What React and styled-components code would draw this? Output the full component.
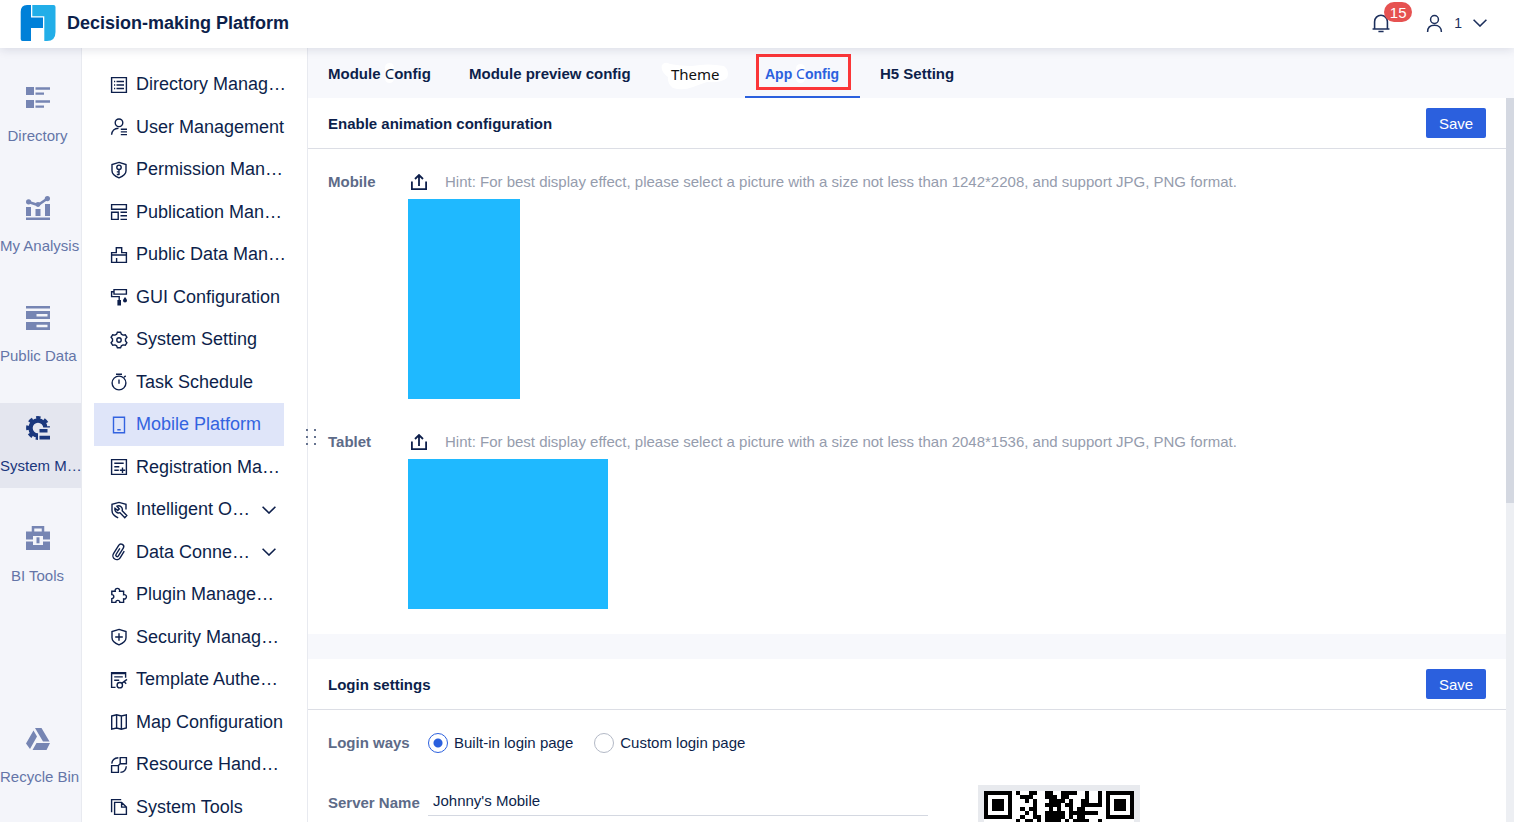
import React, { useState } from "react";
import styled, { createGlobalStyle } from "styled-components";

const GlobalStyle = createGlobalStyle`
  * {
    box-sizing: border-box;
  }

  body {
    margin: 0;
    color: #0d1f4b;
    background: #ffffff;
    font-family: "Liberation Sans", Arial, sans-serif;
    font-size: 15px;
  }

  button,
  input {
    font-family: inherit;
  }
`;

const Page = styled.div`
  display: flex;
  flex-direction: column;
  height: 100vh;
  overflow: hidden;
`;

const Header = styled.header`
  display: flex;
  align-items: center;
  justify-content: space-between;
  flex: none;
  height: 48px;
  padding: 0 27px 2px 20px;
  background: #ffffff;
  box-shadow: 0 1px 10px rgba(20, 30, 70, 0.14);
  z-index: 2;
`;

const Brand = styled.div`
  display: flex;
  align-items: center;
  gap: 11px;
`;

const Title = styled.h1`
  margin: 0;
  font-size: 18px;
  line-height: 24px;
`;

const HeaderTools = styled.div`
  display: flex;
  align-items: center;
  color: #1c2f5c;
`;

const BellButton = styled.button`
  position: relative;
  display: flex;
  margin-right: 36px;
  padding: 0;
  border: 0;
  background: none;
  color: inherit;
`;

const Badge = styled.span`
  position: absolute;
  left: 12px;
  top: -12px;
  width: 28px;
  height: 20px;
  border-radius: 10px;
  background: #e65251;
  color: #ffffff;
  font-size: 15px;
  line-height: 21px;
  text-align: center;
`;

const UserButton = styled.button`
  display: flex;
  align-items: center;
  gap: 11px;
  padding: 0;
  border: 0;
  background: none;
  color: inherit;
  font-size: 14px;
`;

const Body = styled.div`
  display: flex;
  flex: 1;
  min-height: 0;
`;

const Rail = styled.nav`
  display: flex;
  flex-direction: column;
  flex: none;
  gap: 25px;
  width: 82px;
  padding: 25px 0 23px;
  border-right: 1px solid #e8eaf0;
  background: #f4f5fa;
`;

const RailItem = styled.a`
  display: flex;
  flex-direction: column;
  align-items: safe center;
  gap: 16px;
  height: 85px;
  padding: 13px 6px 0 0;
  background: ${(props) => (props.$active ? "#e4e6ef" : "transparent")};
  color: ${(props) => (props.$active ? "#1a377d" : "#7685b3")};
  text-decoration: none;

  &:last-child {
    margin-top: auto;
  }
`;

const RailLabel = styled.span`
  color: ${(props) => (props.$active ? "#1a377d" : "#6475a8")};
  font-size: 15px;
  line-height: 20px;
  white-space: nowrap;
`;

const Menu = styled.nav`
  flex: none;
  width: 226px;
  padding: 15px 23px 0 12px;
  border-right: 1px solid #e8eaf0;
  overflow: hidden;
`;

const MenuItem = styled.a`
  display: flex;
  align-items: center;
  height: 42px;
  padding: 0 8px 0 17px;
  background: ${(props) => (props.$active ? "#dfe5f9" : "transparent")};
  color: ${(props) => (props.$active ? "#3363e0" : "#0d1f4b")};
  font-size: 18px;
  text-decoration: none;
  white-space: nowrap;

  &:nth-child(odd) {
    height: 43px;
  }
`;

const MenuLabel = styled.span`
  flex: 1;
  padding-left: 9px;
`;

const Main = styled.main`
  position: relative;
  display: flex;
  flex-direction: column;
  flex: 1;
  min-width: 0;
`;

const DragHandle = styled.div`
  position: absolute;
  left: -2px;
  top: 381px;
  display: grid;
  grid-template-columns: 2px 2px;
  gap: 5px 6px;
`;

const Dot = styled.span`
  height: 2px;
  background: #66738f;
`;

const Tabs = styled.div`
  display: flex;
  flex: none;
  height: 50px;
  background: #f7f8fc;
`;

const Tab = styled.button`
  position: relative;
  min-width: ${(props) => props.$width}px;
  padding: 4px 18px 0 20px;
  border: 0;
  border-bottom: 2px solid
    ${(props) => (props.$active ? "#2b60de" : "transparent")};
  background: none;
  color: ${(props) => (props.$active ? "#2b60de" : "#0d1f4b")};
  font-size: ${(props) => (props.$active ? 14 : 15)}px;
  font-weight: bold;
  line-height: 18px;
  text-align: left;
  white-space: nowrap;
`;

const ThinLetter = styled.span`
  font-family: "Noto Sans", sans-serif;
  font-weight: normal;
  line-height: 0;
  border-radius: 5px;
  background: #ffffff;
`;

const ThemeLabel = styled.span`
  position: relative;
  color: #111111;
  font-family: "Noto Sans", sans-serif;
  font-size: 15px;
  font-weight: normal;
`;

const Smudge = styled.svg`
  position: absolute;
  left: 10px;
  top: 14px;
`;

const Highlight = styled.span`
  position: absolute;
  left: 11px;
  top: 6px;
  width: 95px;
  height: 36px;
  border: 3px solid #fb3638;
`;

const Scroller = styled.div`
  display: flex;
  flex: 1;
  min-height: 0;
  background: #f7f8fc;
`;

const Content = styled.div`
  display: flex;
  flex-direction: column;
  flex: 1;
  gap: 25px;
  overflow: hidden;
`;

const ScrollTrack = styled.div`
  width: 8px;
  background: #edeff3;
`;

const ScrollThumb = styled.div`
  height: 56%;
  background: #d4d8e1;
`;

const Section = styled.section`
  flex: none;
  background: #ffffff;
`;

const SectionHeader = styled.div`
  display: flex;
  align-items: center;
  justify-content: space-between;
  height: 51px;
  padding: 0 20px;
  border-bottom: 1px solid #dcdee5;
`;

const SectionTitle = styled.h2`
  margin: 0;
  font-size: 15px;
`;

const SaveButton = styled.button`
  width: 60px;
  height: 30px;
  padding: 1px 0 0;
  border: 0;
  border-radius: 2px;
  background: #2b60de;
  color: #ffffff;
  font-size: 15px;
`;

const SectionBody = styled.div`
  display: flex;
  flex-direction: column;
  gap: 25px;
  padding: 15px 20px 25px;
`;

const UploadRow = styled.div`
  display: flex;
  align-items: center;
  height: 35px;
`;

const FieldName = styled.span`
  flex: none;
  width: ${(props) => props.$width}px;
  color: #5d6b88;
  font-size: 15px;
  font-weight: bold;
  line-height: 26px;
  white-space: nowrap;
`;

const UploadButton = styled.button`
  display: flex;
  width: 37px;
  padding: 0 3px;
  border: 0;
  background: none;
  color: #0d1f4b;
`;

const Hint = styled.span`
  color: #959cad;
  font-size: 15px;
  white-space: nowrap;
`;

const Preview = styled.div`
  width: ${(props) => props.$width}px;
  height: ${(props) => props.$height}px;
  margin-left: 80px;
  background: #1fb9ff;
`;

const LoginRow = styled.div`
  display: flex;
  align-items: center;
  height: 35px;
`;

const RadioLabel = styled.label`
  display: flex;
  align-items: center;
  gap: 6px;
  margin-right: 21px;
  font-size: 15px;
`;

const Radio = styled.input`
  appearance: none;
  width: 20px;
  height: 20px;
  margin: 0;
  border: 1px solid #b3b9c6;
  border-radius: 50%;

  &:checked {
    border-color: #2b60de;
    background: radial-gradient(circle, #2b60de 4px, transparent 5px);
  }
`;

const ServerArea = styled.div`
  display: flex;
  align-items: flex-start;
  gap: 50px;
`;

const ServerField = styled.label`
  display: flex;
  align-items: flex-end;
  height: 31px;
`;

const ServerInput = styled.input`
  width: 500px;
  height: 30px;
  padding: 0 5px;
  border: 0;
  border-bottom: 1px solid #d4d8e1;
  color: #0d1f4b;
  font-size: 15px;
`;

const QrFrame = styled.div`
  display: flex;
  width: 162px;
  padding: 6px;
  background: #e8eaee;
`;

const qrRows = [
  "#######.#..##..##..####..#..#.#######",
  "#.....#..###...###.##....#..#.#.....#",
  "#.###.#...#.#...####.#..##..#.#.###.#",
  "#.###.#.....#..####.##..#####.#.###.#",
  "#.###.#..#.##...#.#..#.##.....#.###.#",
  "#.....#...#.#..#####.#######..#.....#",
  "#######..#..##.#####.#.##.....#######",
  "........#.##.#.####.#.####..#........",
];

const QrCode = () => (
  <svg width="150" height="150" viewBox="0 0 37 37" shapeRendering="crispEdges">
    <rect width="37" height="37" fill="#fff" />
    {qrRows.map((row, y) =>
      row
        .split("")
        .map((cell, x) =>
          cell === "#" ? (
            <rect key={`${x}-${y}`} x={x} y={y} width="1" height="1" />
          ) : null
        )
    )}
  </svg>
);

const Logo = () => (
  <svg width="36" height="36" viewBox="0 0 36 36">
    <path
      fill="#0080d8"
      d="M7 0h4v12.500h12v10.500H11V36H2.500Q.7 36 .7 34V7Q.7 0 7 0z"
    />
    <path
      fill="#22aee8"
      d="M12.300 0H33.500Q35.500 0 35.500 2V27Q35.500 36 27 36H24.300V11.300H12.300z"
    />
  </svg>
);

const railIcons = {
  directory: (
    <path d="M0 1h8v8H0zM9.500 1.200H24v2.600H9.500zM9.500 6.400H18v2.400H9.500zM0 14h8v8H0zM9.500 14.200H24v2.600H9.500zM9.500 19.400H18v2.400H9.500z" />
  ),
  analysis: (
    <>
      <path d="M0 11h5v9H0zM9.500 13h5v7h-5zM19 8h5v12h-5zM0 21.500h24V24H0z" />
      <path d="M2.500 6l9.500 3 9.500-6.500" fill="none" stroke="currentColor" strokeWidth="2.500" />
      <circle cx="2.600" cy="5.800" r="2.600" />
      <circle cx="12" cy="8.500" r="2.400" />
      <circle cx="21.400" cy="2.600" r="2.600" />
    </>
  ),
  data: (
    <path
      fillRule="evenodd"
      d="M0 0h24v2.500H0zM0 5h24v8H0zM10.500 8v2.500h11V8zM0 16h24v8H0zM10.500 18.700v2.500h11v-2.500z"
    />
  ),
  system: (
    <>
      <g fill="none" stroke="currentColor">
        <circle cx="12" cy="12" r="7.500" strokeWidth="4.400" />
        <circle cx="12" cy="12" r="10.300" strokeWidth="3.200" strokeDasharray="4.400 3.690" strokeDashoffset="2.200" />
      </g>
      <path fill="#e4e6ef" d="M12 11.500h12.500v13H12z" />
      <path d="M13.500 13h8v3.400h-8zM13.500 19.800H24v3.700H13.500z" />
    </>
  ),
  tools: (
    <>
      <path d="M7 6V1.300h10V6" fill="none" stroke="currentColor" strokeWidth="2.500" />
      <path fillRule="evenodd" d="M0 5.500h24v8h-7V10H7v3.500H0zM0 15.500h7V19h10v-3.500h7V24H0z" />
      <path d="M10.500 11.300h3v6h-3z" />
    </>
  ),
  recycle: (
    <path d="M9 1h6.500l8 13.500H17zM7.500 3.500l3.500 6L4 22 0 16.500zM10.500 16H24l-3.500 7H6.500z" />
  ),
};

const shield =
  "M8 .4l7 2.200v6.200c0 3.200-2.800 5.500-7 7-4.200-1.500-7-3.800-7-7V2.600z";

const menuIcons = {
  directory: (
    <path d="M.6.600h14.800v14.800H.6zM3 4.500h1.200M5.500 4.500H13M3 8h1.200M5.500 8H13M3 11.500h1.200M5.500 11.500H13" />
  ),
  user: (
    <>
      <circle cx="8" cy="3.800" r="3.800" />
      <path d="M.6 15.800C.8 12 3.500 9.300 7.500 9.200M9.800 10.200H16M9.800 12.900H16M9.800 15.600H16" />
    </>
  ),
  permission: (
    <>
      <path d={shield} />
      <circle cx="8" cy="5.300" r="2.200" />
      <path d="M8 7.500v5.600M8 9.900H5.800M8 12.500H5.800" />
    </>
  ),
  publication: (
    <path d="M.6.600h14.800v4.600H.6zM.6 8.300h6.600v7.100H.6zM9.500 8.300H16M9.500 11.800H16M9.500 15.400H16" />
  ),
  publicData: (
    <path d="M.6 15.400V5.600h4.700V.7h5.400v4.900h4.700v9.800zM.6 8h14.800M5.600 11v4.400" />
  ),
  gui: (
    <>
      <path d="M3 .6h12.400v4.500H3zM3 2.800H.6v4.800h7.600V11" />
      <path
        d="M6.400 11h3.600v5.500H6.400zM14 8c1.200 1.700 2 2.500 2 3.600a2 2 0 0 1-4 0C12 10.500 13 9.500 14 8z"
        fill="currentColor"
        stroke="none"
      />
    </>
  ),
  setting: (
    <>
      <path d="M6.400.2h3.200l.8 2 1.600.9 2.300-.4 1.600 2.600L14.500 7v2l1.400 1.700-1.600 2.600-2.300-.4-1.600.9-.8 2H6.400l-.8-2-1.600-.9-2.300.4-1.600-2.600L1.500 9V7L.1 5.300l1.600-2.600 2.300.4 1.600-.9z" />
      <circle cx="8" cy="8" r="2.200" />
    </>
  ),
  timer: (
    <>
      <circle cx="8" cy="9" r="6.900" />
      <path d="M5 .2h6M8 5.600v4.200M13 3.300l1.700-1.400" />
    </>
  ),
  mobile: <path d="M2.500.300h11v15.400h-11zM6.300 12.700h3.400" />,
  registration: (
    <path d="M15.400 7V.6H.6v14.800h14.800V7M3.300 4.300h9.400M3.300 7.700h5M3.300 11.200h4.500M8.800 11.200h5.400M11.500 8.500v5.400" />
  ),
  intelligent: (
    <>
      <path d="M15 7.500V2.400L8 .4 1 2.400v6.200c0 3.400 2 5.600 6.200 7.300" />
      <path d="M6 4.200a3.800 3.800 0 0 1 5.200 4.500l4.600 4.900-2 2.100-4.800-5A3.800 3.800 0 0 1 4 6.200l2.700 2.300L8.300 7z" />
    </>
  ),
  clip: (
    <g transform="rotate(32 8 8)">
      <path d="M12 4.500v7.800a3.900 3.900 0 0 1-7.800 0V2.500a2.700 2.700 0 0 1 5.400 0v9.200a1.400 1.400 0 0 1-2.800 0V4.500" />
    </g>
  ),
  plugin: (
    <path d="M.8 4.300h3.400a2.300 2.300 0 1 1 4.400 0h4v3.400a2.200 2.200 0 1 1 0 4.200v3.500H8.800a2 2 0 1 0-4 0h-4v-3.800a2 2 0 1 0 0-4z" />
  ),
  security: (
    <>
      <path d={shield} />
      <path d="M8 4.200v7.600M4.200 8h7.600" />
    </>
  ),
  template: (
    <>
      <path d="M4.500 15.400H.6V.6h14v5.200M.6 1.500h14M3.200 4.900h8.600M3.200 8.300h5" />
      <circle cx="8.800" cy="13.200" r="2.700" />
      <path d="M10.700 11.400L16 7.400M13 9.500l2.200 2.200" />
    </>
  ),
  map: (
    <path d="M.7 2l4.900-1.200L10.400 2l4.900-1.200V14l-4.900 1.200L5.600 14 .7 15.200zM5.600.8V14M10.400 2v13.200" />
  ),
  resource: (
    <path d="M9.200.6h6.200v6.200H9.200zM.6 8.600h6.800v6.800H.6zM7.400.7C3.600 1 1 3.200.8 6.600M15.300 9.200c-.2 3.600-2.300 5.800-5.900 6.200M7.400 8.600L9.200 6.800" />
  ),
  files: (
    <path d="M.6 13.200V.6h9.600M3.600 3.400h7l4.800 4.700v7.300H3.600zM10.600 3.400v4.700h4.800" />
  ),
};

const LineIcon = ({ children, size = 16 }) => (
  <svg
    width={size}
    height={size}
    viewBox="0 0 16 16"
    fill="none"
    stroke="currentColor"
    strokeWidth="1.400"
    overflow="visible"
  >
    {children}
  </svg>
);

const Chevron = () => (
  <svg
    width="14"
    height="8"
    viewBox="0 0 14 8"
    fill="none"
    stroke="currentColor"
    strokeWidth="1.600"
  >
    <path d="M.6.800L7 7l6.400-6.200" />
  </svg>
);

const railItems = [
  { icon: "directory", label: "Directory" },
  { icon: "analysis", label: "My Analysis" },
  { icon: "data", label: "Public Data" },
  { icon: "system", label: "System M…", active: true },
  { icon: "tools", label: "BI Tools" },
  { icon: "recycle", label: "Recycle Bin" },
];

const menuItems = [
  { icon: "directory", label: "Directory Manag…" },
  { icon: "user", label: "User Management" },
  { icon: "permission", label: "Permission Man…" },
  { icon: "publication", label: "Publication Man…" },
  { icon: "publicData", label: "Public Data Man…" },
  { icon: "gui", label: "GUI Configuration" },
  { icon: "setting", label: "System Setting" },
  { icon: "timer", label: "Task Schedule" },
  { icon: "mobile", label: "Mobile Platform", active: true },
  { icon: "registration", label: "Registration Ma…" },
  { icon: "intelligent", label: "Intelligent O…", more: true },
  { icon: "clip", label: "Data Conne…", more: true },
  { icon: "plugin", label: "Plugin Manage…" },
  { icon: "security", label: "Security Manag…" },
  { icon: "template", label: "Template Authe…" },
  { icon: "map", label: "Map Configuration" },
  { icon: "resource", label: "Resource Hand…" },
  { icon: "files", label: "System Tools" },
];

function Upload({ name, size }) {
  return (
    <UploadRow>
      <FieldName $width={80}>{name}</FieldName>
      <UploadButton aria-label={`Upload ${name}`}>
        <svg
          width="16"
          height="16"
          viewBox="0 0 16 16"
          fill="none"
          stroke="currentColor"
          strokeWidth="1.800"
        >
          <path d="M.9 7.500v7.600h14.200V7.500M8 12V1.200M4 5l4-4 4 4" />
        </svg>
      </UploadButton>
      <Hint>
        Hint: For best display effect, please select a picture with a size not
        less than {size}, and support JPG, PNG format.
      </Hint>
    </UploadRow>
  );
}

function App() {
  const [loginWay, setLoginWay] = useState("builtin");
  const [serverName, setServerName] = useState("Johnny's Mobile");

  return (
    <Page>
      <GlobalStyle />
      <Header>
        <Brand>
          <Logo />
          <Title>Decision-making Platform</Title>
        </Brand>
        <HeaderTools>
          <BellButton aria-label="Notifications">
            <LineIcon size={18}>
              <path d="M2.300 13V6.800a5.700 5.700 0 0 1 11.400 0V13M.5 13.300h15M5.700 15.600h4.600" />
            </LineIcon>
            <Badge>15</Badge>
          </BellButton>
          <UserButton>
            <LineIcon size={17}>
              <circle cx="8" cy="4.200" r="3.700" />
              <path d="M1.500 16c0-4 2.500-6.300 6.500-6.300s6.500 2.300 6.500 6.300" />
            </LineIcon>
            <span>1</span>
            <Chevron />
          </UserButton>
        </HeaderTools>
      </Header>

      <Body>
        <Rail>
          {railItems.map((item) => (
            <RailItem href="#" key={item.label} $active={item.active}>
              <svg width="24" height="24" viewBox="0 0 24 24" fill="currentColor">
                {railIcons[item.icon]}
              </svg>
              <RailLabel $active={item.active}>{item.label}</RailLabel>
            </RailItem>
          ))}
        </Rail>

        <Menu>
          {menuItems.map((item) => (
            <MenuItem href="#" key={item.label} $active={item.active}>
              <LineIcon>{menuIcons[item.icon]}</LineIcon>
              <MenuLabel>{item.label}</MenuLabel>
              {item.more && <Chevron />}
            </MenuItem>
          ))}
        </Menu>

        <Main>
          <Tabs>
            <Tab $width={141}>
              Module <ThinLetter>C</ThinLetter>onfig
            </Tab>
            <Tab $width={202}>Module preview config</Tab>
            <Tab $width={94}>
              <Smudge width="68" height="28" viewBox="0 0 68 28" fill="#ffffff">
                <path d="M1 3Q4-1 9 2q10 2 22 2 16-3 32 0 6 5 3 12-5 5-20 4-9 3-14 5-10 4-20 1-6-5-5-11Q-1 9 1 3z" />
              </Smudge>
              <ThemeLabel>Theme</ThemeLabel>
            </Tab>
            <Tab $width={115} $active>
              App <ThinLetter>C</ThinLetter>onfig
              <Highlight />
            </Tab>
            <Tab $width={114}>H5 Setting</Tab>
          </Tabs>

          <Scroller>
            <Content>
              <Section>
                <SectionHeader>
                  <SectionTitle>Enable animation configuration</SectionTitle>
                  <SaveButton>Save</SaveButton>
                </SectionHeader>
                <SectionBody>
                  <div>
                    <Upload name="Mobile" size="1242*2208" />
                    <Preview $width={112} $height={200} />
                  </div>
                  <div>
                    <Upload name="Tablet" size="2048*1536" />
                    <Preview $width={200} $height={150} />
                  </div>
                </SectionBody>
              </Section>

              <Section>
                <SectionHeader>
                  <SectionTitle>Login settings</SectionTitle>
                  <SaveButton>Save</SaveButton>
                </SectionHeader>
                <SectionBody>
                  <LoginRow>
                    <FieldName $width={100}>Login ways</FieldName>
                    <RadioLabel>
                      <Radio
                        type="radio"
                        name="login"
                        checked={loginWay === "builtin"}
                        onChange={() => setLoginWay("builtin")}
                      />
                      Built-in login page
                    </RadioLabel>
                    <RadioLabel>
                      <Radio
                        type="radio"
                        name="login"
                        checked={loginWay === "custom"}
                        onChange={() => setLoginWay("custom")}
                      />
                      Custom login page
                    </RadioLabel>
                  </LoginRow>
                  <ServerArea>
                    <ServerField>
                      <FieldName $width={100}>Server Name</FieldName>
                      <ServerInput
                        value={serverName}
                        onChange={(event) => setServerName(event.target.value)}
                      />
                    </ServerField>
                    <QrFrame>
                      <QrCode />
                    </QrFrame>
                  </ServerArea>
                </SectionBody>
              </Section>
            </Content>
            <ScrollTrack>
              <ScrollThumb />
            </ScrollTrack>
          </Scroller>

          <DragHandle>
            <Dot />
            <Dot />
            <Dot />
            <Dot />
            <Dot />
            <Dot />
          </DragHandle>
        </Main>
      </Body>
    </Page>
  );
}

export default App;
